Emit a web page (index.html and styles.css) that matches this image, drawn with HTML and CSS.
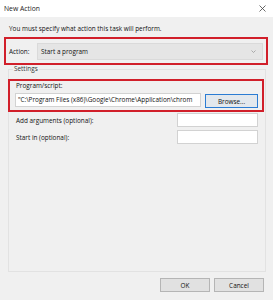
FILE: index.html
```html
<!DOCTYPE html>
<html>
<head>
<meta charset="utf-8">
<link rel="stylesheet" href="styles.css">
</head>
<body>
<div class="dialog">
  <div class="titlebar">
    <span class="title">New Action</span>
    <svg class="close" width="7" height="7" viewBox="0 0 7 7"><path d="M0.5 0.5 L6.5 6.5 M6.5 0.5 L0.5 6.5" stroke="#444" stroke-width="0.8" fill="none"/></svg>
  </div>
  <div class="content">
    <div class="intro">You must specify what action this task will perform.</div>
    <div class="action-box">
      <span class="action-label">Action:</span>
      <div class="combo">
        <span>Start a program</span>
        <svg class="arrow" width="5" height="3" viewBox="0 0 5 3"><path d="M0.5 0.5 L2.5 2.5 L4.5 0.5" stroke="#999" stroke-width="0.8" fill="none"/></svg>
      </div>
    </div>
    <fieldset class="settings">
      <legend>Settings</legend>
      <div class="program-box">
        <div class="prog-label">Program/script:</div>
        <div class="prog-row">
          <div class="input prog-input">"C:\Program Files (x86)\Google\Chrome\Application\chrom</div>
          <div class="btn browse">Browse...</div>
        </div>
      </div>
      <div class="opt-row first">
        <span>Add arguments (optional):</span>
        <div class="input opt-input"></div>
      </div>
      <div class="opt-row">
        <span>Start in (optional):</span>
        <div class="input opt-input"></div>
      </div>
    </fieldset>
    <div class="footer">
      <div class="btn">OK</div>
      <div class="btn">Cancel</div>
    </div>
  </div>
</div>
</body>
</html>
```
FILE: styles.css
```css
* { box-sizing: border-box; }
html, body { margin: 0; padding: 0; }
body {
  background: #f0f0f0;
  font-family: "Open Sans", "Noto Sans", sans-serif;
  font-size: 6.4px;
  color: #111;
  width: 273px;
  height: 300px;
  overflow: hidden;
}
.dialog { display: flex; flex-direction: column; height: 300px; }
.titlebar {
  height: 17px;
  background: #ffffff;
  display: flex;
  align-items: center;
  justify-content: space-between;
  padding: 0 7px 0 4px;
  font-size: 6.8px;
  color: #222;
}
.close { display: block; }
.content { flex: 1; display: flex; flex-direction: column; }
.intro { margin: 7px 0 0 9px; line-height: 10px; }
.action-box {
  margin: 3px 0 0 4px;
  width: 264px;
  height: 28px;
  border: 2px solid #d11f2a;
  display: flex;
  align-items: center;
  padding-left: 3px;
}
.action-label { width: 28px; }
.combo {
  width: 226px;
  height: 17px;
  background: #e5e5e5;
  border: 1px solid #dadada;
  display: flex;
  align-items: center;
  justify-content: space-between;
  padding: 0 6px 0 3px;
}
.arrow { display: block; }
.settings {
  margin: -1px 0 0 8px;
  width: 258px;
  flex: 1;
  border: 1px solid #e2e2e2;
  padding: 0;
  min-width: 0;
}
.settings legend { margin-left: 4px; padding: 0 1px; line-height: 10px; color: #333; }
.program-box {
  margin: 5px 0 0 -1px;
  width: 256px;
  border: 2px solid #d11f2a;
  padding: 0 0 2px 5px;
}
.prog-label { line-height: 10px; padding-left: 1px; }
.prog-row { display: flex; align-items: flex-start; margin-top: 2px; }
.input {
  background: #ffffff;
  border: 1px solid #d2d2d2;
  height: 14px;
}
.prog-input {
  width: 186px;
  line-height: 12px;
  padding-left: 2px;
  white-space: nowrap;
  overflow: hidden;
}
.btn {
  background: #e1e1e1;
  border: 1px solid #b5b5b5;
  height: 14px;
  display: flex;
  align-items: center;
  justify-content: center;
}
.browse {
  margin: 1px 0 0 4px;
  width: 53px;
  background: #e3e8ed;
  border-color: #2b7cd3;
}
.opt-row {
  display: flex;
  align-items: center;
  justify-content: space-between;
  padding: 0 7px 0 7px;
  margin-top: 3px;
}
.opt-row.first { margin-top: 1px; }
.opt-input { width: 81px; }
.footer {
  display: flex;
  justify-content: flex-end;
  gap: 4px;
  padding: 6px 9px 8px 0;
}
.footer .btn { width: 50px; }
```
